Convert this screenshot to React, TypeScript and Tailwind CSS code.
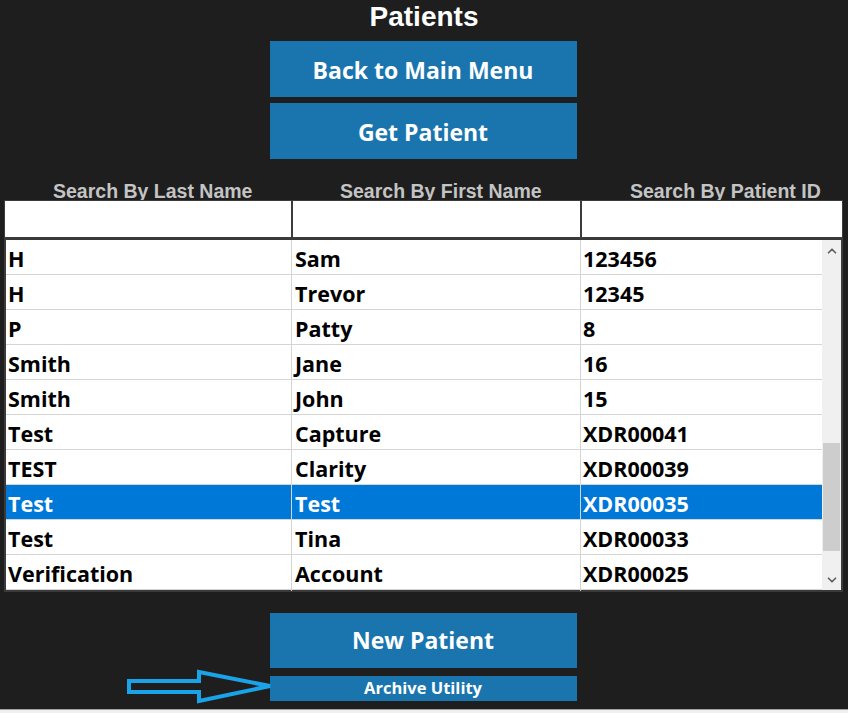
import { ChevronDown, ChevronUp } from "lucide-react";

type Patient = { last: string; first: string; id: string };

const patients: Patient[] = [
  { last: "H", first: "Sam", id: "123456" },
  { last: "H", first: "Trevor", id: "12345" },
  { last: "P", first: "Patty", id: "8" },
  { last: "Smith", first: "Jane", id: "16" },
  { last: "Smith", first: "John", id: "15" },
  { last: "Test", first: "Capture", id: "XDR00041" },
  { last: "TEST", first: "Clarity", id: "XDR00039" },
  { last: "Test", first: "Test", id: "XDR00035" },
  { last: "Test", first: "Tina", id: "XDR00033" },
  { last: "Verification", first: "Account", id: "XDR00025" },
];

const SELECTED = "XDR00035";

function MenuButton({ label, tall = true }: { label: string; tall?: boolean }) {
  return (
    <button
      className={`flex w-[307px] items-center justify-center bg-[#1a75ae] font-['Open_Sans',sans-serif] font-bold text-white ${
        tall ? "h-[56px] pt-[3px] text-[23px]" : "h-[25px] text-[16.5px]"
      }`}
    >
      {label}
    </button>
  );
}

function ArchiveArrow() {
  return (
    <svg
      className="pointer-events-none absolute left-[-144px] top-[-8px]"
      width="150"
      height="40"
      viewBox="0 0 150 40"
      aria-hidden
    >
      <polygon
        points="3,13 73,13 73,4 144,18 73,33 73,24 3,24"
        fill="none"
        stroke="#1aa3e8"
        strokeWidth="4"
        strokeLinejoin="miter"
      />
    </svg>
  );
}

export default function App() {
  return (
    <div className="flex h-[713px] w-[848px] flex-col overflow-hidden bg-[#1e1e1e]">
      <h1 className="h-[33px] text-center font-['Liberation_Sans',Arial,sans-serif] text-[28px] font-bold leading-[33px] text-white">
        Patients
      </h1>

      <div className="mt-[8px] flex flex-col items-center gap-[6px] pr-[2px]">
        <MenuButton label="Back to Main Menu" />
        <MenuButton label="Get Patient" />
      </div>

      <div className="mt-[20px] grid h-[21px] w-[843px] grid-cols-[298px_290px_1fr] font-['Liberation_Sans',Arial,sans-serif] text-[19.5px] font-bold leading-[24px] text-[#c4c4c4]">
        <span className="pl-[53px]">Search By Last Name</span>
        <span className="pl-[42px]">Search By First Name</span>
        <span className="pl-[42px]">Search By Patient ID</span>
      </div>

      <div className="ml-[4px] grid h-[38px] w-[839px] grid-cols-[288px_289px_1fr] border border-[#3c3c3c] bg-white">
        <input className="border-r-2 border-[#3c3c3c] outline-none" />
        <input className="border-r-2 border-[#3c3c3c] outline-none" />
        <input className="outline-none" />
      </div>

      <div className="ml-[4px] flex h-[354px] w-[839px] border-2 border-[#3a3a3a] bg-white font-['Open_Sans',sans-serif] text-[21.5px] font-bold">
        <div className="flex-1">
          {patients.map((p) => {
            const sel = p.id === SELECTED;
            return (
              <div
                key={p.id}
                className={`grid h-[35px] grid-cols-[286px_289px_1fr] border-b border-[#d4d4d4] leading-[34px] ${
                  sel ? "bg-[#0078d7] text-white" : "text-black"
                }`}
              >
                <span className="border-r border-[#d4d4d4] pl-[2px] pt-[2px]">{p.last}</span>
                <span className="border-r border-[#d4d4d4] pl-[3px] pt-[2px]">{p.first}</span>
                <span className="pl-[2px] pt-[2px]">{p.id}</span>
              </div>
            );
          })}
        </div>
        <div className="flex w-[19px] flex-col items-center bg-[#f0f0f0]">
          <ChevronUp className="mt-[4px] h-[14px] w-[14px] text-[#606060]" strokeWidth={3} />
          <div className="mt-[185px] h-[108px] w-[17px] bg-[#cdcdcd]" />
          <div className="flex-1" />
          <ChevronDown className="mb-[3px] h-[14px] w-[14px] text-[#606060]" strokeWidth={3} />
        </div>
      </div>

      <div className="mt-[21px] flex flex-col items-center gap-[8px] pr-[2px]">
        <div className="flex h-[55px] w-[307px] items-center justify-center bg-[#1a75ae] font-['Open_Sans',sans-serif] text-[23px] font-bold text-white">
          New Patient
        </div>
        <div className="relative">
          <ArchiveArrow />
          <MenuButton label="Archive Utility" tall={false} />
        </div>
      </div>

      <div className="flex-1" />
      <div className="h-[4px] border-t border-[#a0a0a0] bg-[#f0f0f0]" />
    </div>
  );
}
